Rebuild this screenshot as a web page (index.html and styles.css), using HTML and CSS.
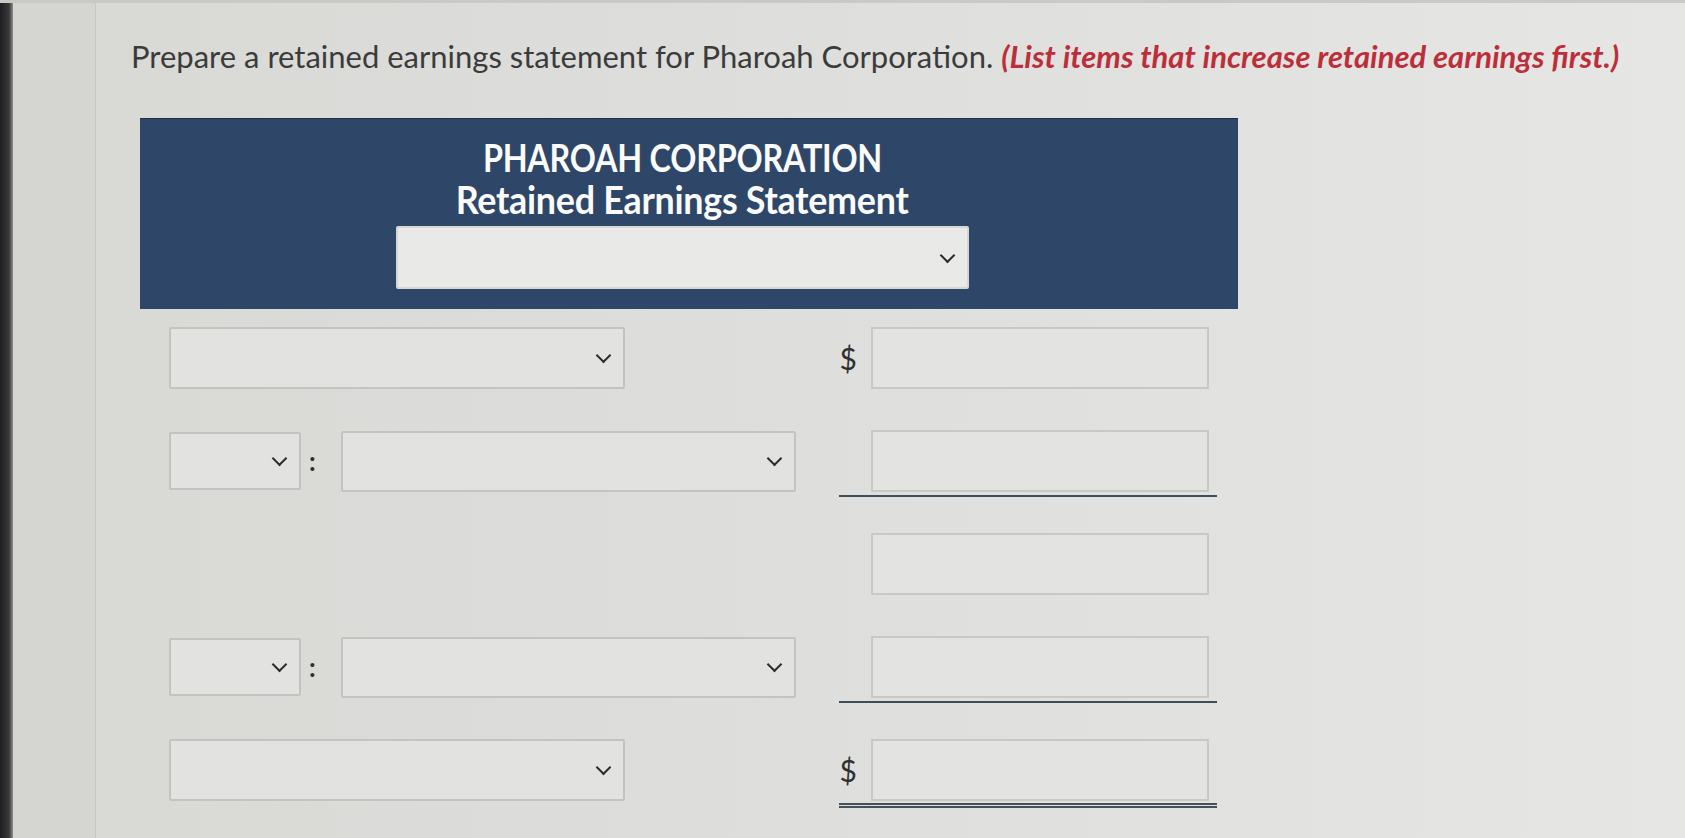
FILE: index.html
```html
<!DOCTYPE html>
<html lang="en">
<head>
<meta charset="utf-8">
<title>Retained Earnings Statement</title>
<link rel="stylesheet" href="styles.css">
</head>
<body>
<div class="screen">
  <div class="bezel"></div>
  <div class="side"></div>
  <main class="content">
    <p class="prompt">Prepare a retained earnings statement for Pharoah Corporation. <em class="hint">(List items that increase retained earnings first.)</em></p>

    <section class="banner">
      <div class="company">PHAROAH CORPORATION</div>
      <div class="stmt">Retained Earnings Statement</div>
      <div class="select date"><span class="chev"></span></div>
    </section>

    <section class="rows">
      <div class="row r1">
        <div class="left"><div class="select wide"><span class="chev"></span></div></div>
        <div class="cur">$</div>
        <div class="amt"><div class="box"></div></div>
      </div>
      <div class="row r2">
        <div class="left">
          <div class="select small"><span class="chev"></span></div>
          <span class="colon">:</span>
          <div class="select mid"><span class="chev"></span></div>
        </div>
        <div class="cur"></div>
        <div class="amt single"><div class="box"></div></div>
      </div>
      <div class="row r3">
        <div class="left"></div>
        <div class="cur"></div>
        <div class="amt"><div class="box"></div></div>
      </div>
      <div class="row r4">
        <div class="left">
          <div class="select small"><span class="chev"></span></div>
          <span class="colon">:</span>
          <div class="select mid"><span class="chev"></span></div>
        </div>
        <div class="cur"></div>
        <div class="amt single"><div class="box"></div></div>
      </div>
      <div class="row r5">
        <div class="left"><div class="select wide"><span class="chev"></span></div></div>
        <div class="cur">$</div>
        <div class="amt double"><div class="box"></div></div>
      </div>
    </section>
  </main>
</div>
</body>
</html>
```

FILE: styles.css
```css
html, body {
  margin: 0;
  padding: 0;
  height: 100%;
}
body {
  background: #e2e2df;
  font-family: Lato, "Open Sans", sans-serif;
  overflow: hidden;
}
.screen {
  display: flex;
  height: 838px;
  background: linear-gradient(90deg, #d8d9d5 0%, #dddedb 40%, #e2e3e0 75%, #e6e7e4 100%);
  border-top: 3px solid #c9c9c6;
  box-sizing: border-box;
}
.bezel {
  width: 13px;
  flex: none;
  background: linear-gradient(90deg, #1e1e20 0%, #3a3a3d 70%, #8d8d8c 100%);
}
.side {
  width: 82px;
  flex: none;
  background: #d5d5d1;
  border-right: 1px solid #c6c6c2;
}
.content {
  flex: 1;
  padding-left: 35px;
}
.prompt {
  margin: 34px 0 0;
  font-size: 31px;
  line-height: 38px;
  color: #3b3b3b;
  letter-spacing: 0;
  white-space: nowrap;
}
.hint {
  color: #bc2f3a;
  font-weight: 700;
  font-style: italic;
}
.banner {
  margin: 43px 0 0 9px;
  width: 1098px;
  height: 191px;
  box-sizing: border-box;
  background: #2e4667;
  border-top: 1px solid #1f2f45;
  display: flex;
  flex-direction: column;
  align-items: center;
  padding: 17px 14px 0 0;
  color: #fbfbfb;
  font-weight: 700;
}
.company {
  font-size: 39px;
  line-height: 42px;
  letter-spacing: -0.3px;
  transform: scaleX(0.83);
  white-space: nowrap;
}
.stmt {
  font-size: 39px;
  line-height: 42px;
  letter-spacing: -0.3px;
  transform: scaleX(0.92);
  white-space: nowrap;
}
.select {
  position: relative;
  box-sizing: border-box;
  height: 60px;
  background: #e2e3e0;
  border: 2px solid #c3c3c0;
  border-radius: 2px;
}
.banner .select.date {
  margin-top: 6px;
  width: 573px;
  height: 63px;
  background: #e9e9e7;
  border-color: #d6d6d4;
}
.chev {
  position: absolute;
  right: 14px;
  top: 50%;
  width: 9px;
  height: 9px;
  margin-top: -8px;
  border-right: 2.5px solid #2b2b2b;
  border-bottom: 2.5px solid #2b2b2b;
  transform: rotate(45deg);
}
.rows {
  margin: 18px 0 0 38px;
  display: flex;
  flex-direction: column;
  gap: 41px;
}
.row {
  display: flex;
  align-items: center;
  height: 62px;
}
.left {
  width: 660px;
  display: flex;
  align-items: center;
}
.select.wide {
  width: 456px;
  height: 62px;
}
.select.small {
  width: 132px;
  height: 58px;
}
.select.mid {
  width: 455px;
  height: 61px;
}
.colon {
  width: 40px;
  box-sizing: border-box;
  padding-left: 8px;
  text-align: left;
  font-size: 26px;
  color: #2f2f2f;
  font-weight: 700;
}
.cur {
  width: 42px;
  box-sizing: border-box;
  padding-right: 14px;
  font-size: 30px;
  color: #2f2f2f;
  text-align: right;
}
.amt {
  width: 346px;
  padding: 0 8px 0 0;
  box-sizing: border-box;
  position: relative;
}
.box {
  height: 62px;
  background: #e3e4e1;
  border: 2px solid #c8c8c5;
  box-sizing: border-box;
  width: 338px;
}
.amt.single {
  margin-left: -32px;
  width: 378px;
  padding-left: 32px;
  padding-bottom: 3px;
  border-bottom: 2px solid #3f4f5a;
  margin-bottom: -5px;
}
.amt.double {
  margin-left: -32px;
  width: 378px;
  padding-left: 32px;
  padding-bottom: 2px;
  border-bottom: 5px double #45525c;
  margin-bottom: -7px;
}
```
